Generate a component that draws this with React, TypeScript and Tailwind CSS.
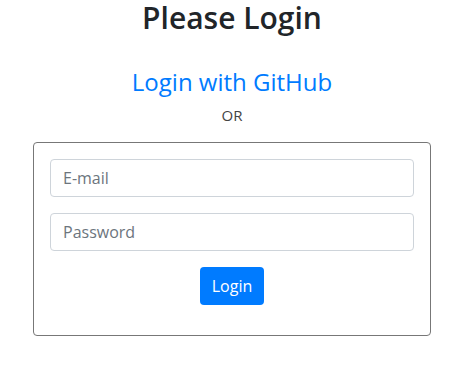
export default function App() {
  return (
    <div className="min-h-screen bg-white font-['Open_Sans',sans-serif]">
      <div className="w-[464px] flex flex-col items-center">
        <h1 className="text-[30px] leading-[36px] font-semibold text-[#212529]">Please Login</h1>

        <a href="#" className="mt-[30px] text-[24px] leading-[32px] font-medium text-[#007bff]">
          Login with GitHub
        </a>
        <p className="mt-[5px] text-[15px] leading-[24px] text-[#444]">OR</p>

        <form className="mt-[15px] w-[398px] h-[194px] border border-[#777] rounded-[4px] p-4 flex flex-col gap-4">
          <input
            type="text"
            placeholder="E-mail"
            className="h-[38px] w-full rounded-[4px] border border-[#ced4da] px-3 text-[16px] text-[#495057] placeholder:text-[#6c757d] outline-none"
          />
          <input
            type="password"
            placeholder="Password"
            className="h-[38px] w-full rounded-[4px] border border-[#ced4da] px-3 text-[16px] text-[#495057] placeholder:text-[#6c757d] outline-none"
          />
          <div className="flex justify-center">
            <button type="button" className="h-[38px] px-3 rounded-[4px] bg-[#007bff] text-white text-[16px]">
              Login
            </button>
          </div>
        </form>
      </div>
    </div>
  );
}
